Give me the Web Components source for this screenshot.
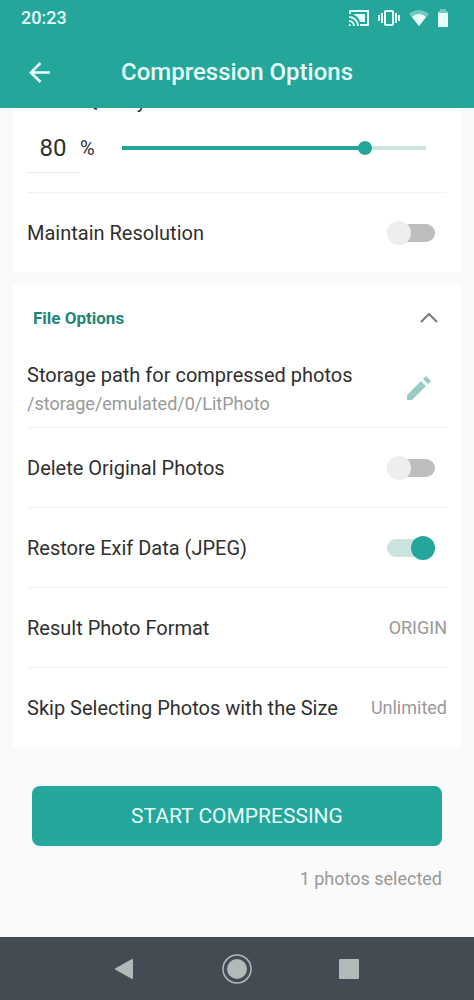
<!DOCTYPE html>
<html lang="en">
<head>
<meta charset="utf-8">
<meta name="viewport" content="width=device-width, initial-scale=1">
<title>Compression Options</title>
<style>
  :root {
    --teal: #24a69a;
    --teal-dark: #1f8577;
    --teal-light: #cbe4e0;
    --ink: #2f2f2f;
    --muted: #999;
    --line: #f1f3f3;
    --page: #fafafa;
  }
  body { margin: 0; font-family: Roboto, "Noto Sans", sans-serif; color: var(--ink); }
</style>
</head>
<body>
<app-screen>
  <status-bar slot="top" time="20:23"></status-bar>
  <app-bar slot="top">Compression Options</app-bar>

  <option-card>
    <quality-row value="80">Photo Quality</quality-row>
    <switch-row>Maintain Resolution</switch-row>
  </option-card>

  <option-card heading="File Options">
    <path-row path="/storage/emulated/0/LitPhoto">Storage path for compressed photos</path-row>
    <switch-row>Delete Original Photos</switch-row>
    <switch-row checked>Restore Exif Data (JPEG)</switch-row>
    <value-row value="ORIGIN">Result Photo Format</value-row>
    <value-row value="Unlimited">Skip Selecting Photos with the Size</value-row>
  </option-card>

  <start-panel note="1 photos selected">START COMPRESSING</start-panel>

  <nav-bar slot="bottom"></nav-bar>
</app-screen>

<script>
const base = `
  *, *::before, *::after { box-sizing: border-box; }
  button, input { font: inherit; color: inherit; margin: 0; padding: 0; border: 0; background: none; }
  svg { display: block; }
  .label { font-size: 20px; line-height: 24px; }
`;

class Base extends HTMLElement {
  constructor() {
    super();
    this.attachShadow({ mode: "open" });
  }
  connectedCallback() {
    this.shadowRoot.innerHTML = `<style>${base}${this.css()}</style>${this.html()}`;
    this.ready();
  }
  css() { return ""; }
  html() { return "<slot></slot>"; }
  ready() {}
}

customElements.define("status-bar", class extends Base {
  css() { return `
    :host { display: flex; align-items: center; justify-content: space-between; height: 36px; padding: 0 26px 0 21px; color: #e6fffb; }
    time { font-size: 18px; line-height: 24px; font-weight: 500; }
    .icons { display: flex; align-items: center; gap: 9px; }`; }
  html() { return `
    <time>${this.getAttribute("time")}</time>
    <div class="icons">
      <svg width="20" height="16" viewBox="0 0 20 16" fill="none" stroke="currentColor" stroke-width="2" aria-hidden="true">
        <path d="M1 4V1h18v14h-8"/><path d="M5 4h11v8h-5C10 8 8 6 5 5z" fill="currentColor" stroke="none"/>
        <path d="M0 7a9 9 0 0 1 9 9M0 11a5 5 0 0 1 5 5"/><path d="M0 14a2 2 0 0 1 2 2H0z" fill="currentColor" stroke="none"/>
      </svg>
      <svg width="22" height="16" viewBox="0 0 22 16" fill="none" stroke="currentColor" stroke-width="2" aria-hidden="true">
        <rect x="7" y="1" width="8" height="14" rx="1"/><path d="M4 3v10M18 3v10M1 5v6M21 5v6"/>
      </svg>
      <svg width="20" height="16" viewBox="0 0 20 16" fill="currentColor" aria-hidden="true">
        <path d="M0 4C6-1 14-1 20 4L10 16z" opacity=".4"/><path d="M3 7c4-4 10-4 14 0l-7 9z"/>
      </svg>
      <svg width="10" height="18" viewBox="0 0 10 18" fill="currentColor" aria-hidden="true">
        <path d="M0 2h2V0h6v2h2v3H0z" opacity=".4"/><rect y="4" width="10" height="14"/>
      </svg>
    </div>`; }
});

customElements.define("app-bar", class extends Base {
  css() { return `
    :host { display: grid; grid-template-columns: 64px 1fr 64px; align-items: center; height: 72px; color: #e6fffb; }
    button { display: grid; place-items: center end; padding-right: 14px; height: 48px; }
    h1 { margin: 0; font-size: 24px; line-height: 32px; font-weight: 500; text-align: center; }`; }
  html() { return `
    <button aria-label="Back"><svg width="21" height="21" viewBox="0 0 22 22" fill="none" stroke="currentColor" stroke-width="2.8"><path d="M22 11H2M12 1L2 11l10 10"/></svg></button>
    <h1><slot></slot></h1>`; }
});

customElements.define("option-card", class extends Base {
  css() { return `
    :host { display: block; margin: 0 13px 13px; padding: 0 14px; background: #fff; border-radius: 2px; }
    .head { display: flex; align-items: center; justify-content: space-between; height: 65px; padding: 0 9px 0 6px; }
    h2 { margin: 0; font-size: 17px; line-height: 24px; font-weight: 700; color: var(--teal-dark); }
    button { color: #7d7d7d; }
    ::slotted(*) { border-bottom: 1px solid var(--line); }
    ::slotted(:last-child) { border-bottom: 0; }`; }
  html() {
    const heading = this.getAttribute("heading");
    return (heading ? `<div class="head"><h2>${heading}</h2>
      <button aria-label="Collapse ${heading}" aria-expanded="true"><svg width="18" height="12" viewBox="0 0 18 12" fill="none" stroke="currentColor" stroke-width="2.2"><path d="M1 10l8-8 8 8"/></svg></button></div>` : "") + "<slot></slot>";
  }
});

customElements.define("quality-row", class extends Base {
  css() { return `
    :host { display: block; padding: 14px 0 19px; }
    label { display: block; margin-bottom: 10px; }
    .controls { display: flex; align-items: center; height: 50px; }
    #number { width: 52px; height: 50px; border-bottom: 1px solid #dfe9e8; text-align: center; font-size: 24px; }
    .unit { width: 36px; padding-left: 1px; font-size: 20px; line-height: 24px; }
    #slider { flex: 1; min-width: 0; height: 24px; margin-right: 14px; appearance: none; }
    #slider::-webkit-slider-runnable-track { height: 4px; background: linear-gradient(to right,
      transparent 7px, var(--teal) 7px, var(--teal) var(--fill), var(--teal-light) var(--fill),
      var(--teal-light) calc(100% - 7px), transparent calc(100% - 7px)); }
    #slider::-webkit-slider-thumb { appearance: none; width: 14px; height: 14px; margin-top: -5px; border-radius: 50%; background: var(--teal); }`; }
  html() {
    const v = this.getAttribute("value");
    return `<label class="label" for="number"><slot></slot></label>
    <div class="controls">
      <input id="number" type="text" inputmode="numeric" value="${v}"><span class="unit">%</span>
      <input id="slider" type="range" min="0" max="100" value="${v}" aria-label="Quality" style="--fill:${v}%">
    </div>`;
  }
  ready() {
    const number = this.shadowRoot.getElementById("number");
    const slider = this.shadowRoot.getElementById("slider");
    slider.addEventListener("input", () => {
      number.value = slider.value;
      slider.style.setProperty("--fill", slider.value + "%");
    });
  }
});

customElements.define("switch-row", class extends Base {
  css() { return `
    :host { display: block; }
    label { display: flex; align-items: center; justify-content: space-between; height: 79px; padding-right: 12px; }
    input { appearance: none; display: flex; align-items: center; width: 48px; height: 18px; border-radius: 9px; background: #bdbdbd; }
    input::before { content: ""; width: 24px; height: 24px; flex: none; border-radius: 50%; background: #eee; }
    input:checked { background: var(--teal-light); justify-content: flex-end; }
    input:checked::before { background: var(--teal); }`; }
  html() { return `<label class="label"><slot></slot><input type="checkbox" role="switch" ${this.hasAttribute("checked") ? "checked" : ""}></label>`; }
});

customElements.define("path-row", class extends Base {
  css() { return `
    :host { display: flex; align-items: center; justify-content: space-between; padding: 13px 16px 11px 0; }
    .path { margin-top: 5px; font-size: 18px; line-height: 24px; color: var(--muted); }
    button { color: #99cbc5; padding-bottom: 4px; }`; }
  html() { return `
    <div><div class="label"><slot></slot></div><div class="path">${this.getAttribute("path")}</div></div>
    <button aria-label="Edit storage path"><svg width="24" height="24" viewBox="0 0 24 24" fill="currentColor"><path d="M0 19L14 5l5 5L5 24H0zM16 3l3-3 5 5-3 3z"/></svg></button>`; }
});

customElements.define("value-row", class extends Base {
  css() { return `
    :host { display: flex; align-items: center; justify-content: space-between; height: 79px; }
    button { font-size: 18px; line-height: 24px; color: var(--muted); }`; }
  html() { return `<span class="label" id="name"><slot></slot></span><button id="value" aria-labelledby="name value">${this.getAttribute("value")}</button>`; }
});

customElements.define("start-panel", class extends Base {
  css() { return `
    :host { display: block; padding: 26px 32px 46px; }
    button { display: block; width: 100%; height: 60px; border-radius: 8px; background: var(--teal); color: #e6fffb; font-size: 21px; line-height: 28px; }
    p { margin: 21px 0 0; font-size: 18px; line-height: 24px; text-align: right; color: var(--muted); }`; }
  html() { return `<button><slot></slot></button><p>${this.getAttribute("note")}</p>`; }
});

customElements.define("nav-bar", class extends Base {
  css() { return `
    :host { display: flex; justify-content: center; height: 63px; background: #444b52; color: #b2b9b9; }
    button { display: grid; place-items: center; width: 112px; }`; }
  html() { return `
    <button aria-label="Back"><svg width="20" height="22" viewBox="0 0 20 22"><path d="M1 11L17 2v18z" fill="currentColor" stroke="currentColor" stroke-width="2" stroke-linejoin="round"/></svg></button>
    <button aria-label="Home"><svg width="30" height="30" viewBox="0 0 30 30"><circle cx="15" cy="15" r="14" fill="none" stroke="currentColor" stroke-width="1.5"/><circle cx="15" cy="15" r="10" fill="currentColor"/></svg></button>
    <button aria-label="Recent apps"><svg width="20" height="20" viewBox="0 0 20 20"><rect width="20" height="20" rx="1" fill="currentColor"/></svg></button>`; }
});

customElements.define("app-screen", class extends Base {
  css() { return `
    :host { display: flex; flex-direction: column; height: 100vh; background: var(--page); }
    header { flex: none; background: var(--teal); }
    main { flex: 1; min-height: 0; overflow-y: auto; scrollbar-width: none; }
    footer { flex: none; }`; }
  html() { return `<header><slot name="top"></slot></header><main><slot></slot></main><footer><slot name="bottom"></slot></footer>`; }
  scrollToEnd() {
    const main = this.shadowRoot.querySelector("main");
    main.scrollTop = main.scrollHeight;
  }
});

document.querySelector("app-screen").scrollToEnd();
</script>
</body>
</html>
